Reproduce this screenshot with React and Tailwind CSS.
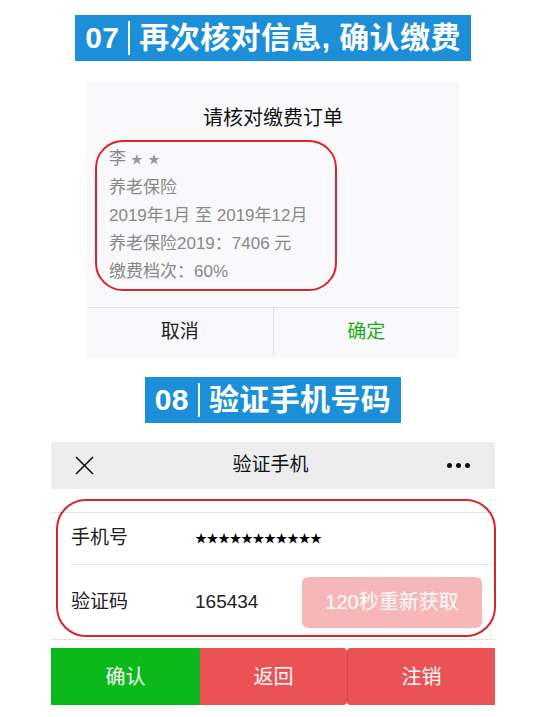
import React from 'react';

const font = { fontFamily: '"Liberation Sans", "Noto Sans CJK SC", sans-serif' };

const Banner = ({ num, title }) => (
  <div className="mx-auto w-fit bg-[#1c8fd8] px-[10px] h-[46px] flex items-center text-white font-bold text-[30px] leading-none tracking-[0.4px]">
    <span>{num}</span>
    <span className="mx-[9px] w-[2px] h-[34px] bg-white inline-block" />
    <span>{title}</span>
  </div>
);

const App = () => {
  const lines = ['养老保险', '2019年1月 至 2019年12月', '养老保险2019：7406 元', '缴费档次：60%'];

  return (
    <div className="w-[546px] h-[717px] bg-white overflow-hidden" style={font}>
      <div className="pt-[15px]">
        <Banner num="07" title="再次核对信息, 确认缴费" />
      </div>

      {/* confirm dialog */}
      <div className="mx-auto mt-[21px] w-[372px] h-[275px] bg-[#f9f9fb] flex flex-col">
        <div className="pt-[23px] text-center text-[20px] leading-[26px] text-[#111]">请核对缴费订单</div>
        <div className="ml-[8px] mt-[9px] w-[242px] h-[151px] border-2 border-[#d7252b] rounded-[28px] pl-[12px] pt-[3px] text-[17px] text-[#888] leading-[28px]">
          <div>李 <span className="text-[12px] tracking-[1px] text-[#999]">★ ★</span></div>
          {lines.map(l => <div key={l}>{l}</div>)}
        </div>
        <div className="mt-[16px] border-t border-[#e2e2e4] flex flex-1">
          <div className="flex-1 flex items-center justify-center text-[19px] text-[#222] border-r border-[#e2e2e4]">取消</div>
          <div className="flex-1 flex items-center justify-center text-[19px] text-[#1aad19]">确定</div>
        </div>
      </div>

      <div className="mt-[20px]">
        <Banner num="08" title="验证手机号码" />
      </div>

      {/* phone verify */}
      <div className="mx-auto mt-[19px] w-[444px]">
        <div className="h-[47px] bg-[#ededed] flex items-center justify-between px-[24px] text-[#111]">
          <svg width="19" height="19" viewBox="0 0 19 19" fill="none" stroke="#111" strokeWidth="1.6">
            <path d="M1 1L18 18M18 1L1 18" />
          </svg>
          <span className="text-[19px]">验证手机</span>
          <div className="flex gap-[4px] pr-[1px]">
            <span className="w-[5px] h-[5px] rounded-full bg-[#111]" />
            <span className="w-[5px] h-[5px] rounded-full bg-[#111]" />
            <span className="w-[5px] h-[5px] rounded-full bg-[#111]" />
          </div>
        </div>

        <div className="relative mt-[23px] border-t border-b border-[#e5e5e5]">
          <div className="ml-[20px] h-[52px] flex items-center border-b border-[#e5e5e5] text-[19px] text-[#222]">
            <span className="w-[124px]">手机号</span>
            <span className="text-[12px] tracking-[-0.5px] text-black">★★★★★★★★★★★</span>
          </div>
          <div className="ml-[20px] h-[74px] flex items-center text-[19px] text-[#222]">
            <span className="w-[124px]">验证码</span>
            <span>165434</span>
            <div className="ml-auto mr-[13px] w-[180px] h-[51px] rounded-[6px] bg-[#f7b7b9] flex items-center justify-center text-white text-[20px]">120秒重新获取</div>
          </div>
          <div className="absolute left-[5px] top-[-14px] w-[440px] h-[138px] border-2 border-[#d7252b] rounded-[30px] pointer-events-none" />
        </div>

        <div className="mt-[8px] h-[57px] flex text-white text-[20px]">
          <div className="w-[149px] bg-[#0bba1a] flex items-center justify-center">确认</div>
          <div className="w-[147px] bg-[#eb5254] flex items-center justify-center rounded-r-[4px]">返回</div>
          <div className="flex-1 bg-[#eb5254] flex items-center justify-center border-l border-[#d94446] rounded-l-[4px]">注销</div>
        </div>
      </div>
    </div>
  );
};

export default App;
